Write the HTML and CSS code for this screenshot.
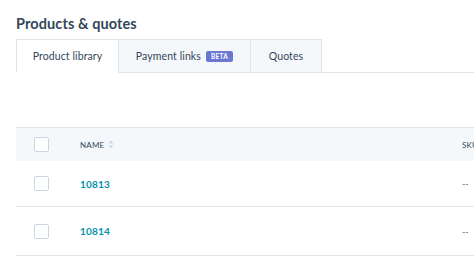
FILE: index.html
```html
<!DOCTYPE html>
<html lang="en">
<head>
    <meta charset="UTF-8">
    <meta name="viewport" content="width=device-width, initial-scale=1.0">
    <title>Products &amp; quotes</title>
    <link rel="stylesheet" href="styles.css">
</head>
<body>
    <div class="page">
        <h1 class="page-title">Products &amp; quotes</h1>

        <div class="tabs">
            <div class="tab active">Product library</div>
            <div class="tab">Payment links <span class="badge">BETA</span></div>
            <div class="tab">Quotes</div>
            <div class="tab-rest"></div>
        </div>

        <div class="table">
            <div class="row head">
                <div class="cell check"><span class="box"></span></div>
                <div class="cell name">NAME
                    <svg class="sort" width="6" height="9" viewBox="0 0 6 9">
                        <path d="M3 0.5 L5.5 3.5 H0.5 Z" fill="#cbd6e2"/>
                        <path d="M3 8.5 L5.5 5.5 H0.5 Z" fill="#cbd6e2"/>
                    </svg>
                </div>
                <div class="cell sku">SKU</div>
            </div>
            <div class="row">
                <div class="cell check"><span class="box"></span></div>
                <div class="cell name"><a href="#" class="link">10813</a></div>
                <div class="cell sku muted">--</div>
            </div>
            <div class="row">
                <div class="cell check"><span class="box"></span></div>
                <div class="cell name"><a href="#" class="link">10814</a></div>
                <div class="cell sku muted">--</div>
            </div>
            <div class="row">
                <div class="cell check"></div>
                <div class="cell name"></div>
                <div class="cell sku"></div>
            </div>
        </div>
    </div>
</body>
</html>
```

FILE: styles.css
```css
body {
    margin: 0;
    padding: 0;
    background-color: #ffffff;
    font-family: Lato, "Open Sans", Arial, sans-serif;
    color: #33475b;
    overflow: hidden;
}

.page {
    padding: 14px 0 0 16px;
    width: 700px;
}

.page-title {
    margin: 0;
    font-size: 14.5px;
    font-weight: 700;
    line-height: 19px;
    letter-spacing: 0.1px;
    color: #33475b;
}

.tabs {
    display: flex;
    margin-top: 6px;
    height: 34px;
}

.tab {
    display: flex;
    align-items: center;
    justify-content: center;
    box-sizing: border-box;
    font-size: 10.5px;
    letter-spacing: 0.1px;
    background: #f5f8fa;
    border: 1px solid #dfe3eb;
    border-left: none;
    color: #33475b;
}

.tab:nth-child(1) { width: 103px; }
.tab:nth-child(2) { width: 132px; }
.tab:nth-child(3) { width: 71px; }

.tab.active {
    background: #ffffff;
    border-left: 1px solid #dfe3eb;
    border-bottom-color: #ffffff;
}

.tab-rest {
    flex: 1;
    border-bottom: 1px solid #dfe3eb;
}

.badge {
    display: inline-block;
    margin-left: 5px;
    padding: 0 5px;
    height: 11px;
    line-height: 11px;
    font-size: 6.5px;
    font-weight: 700;
    letter-spacing: 0.3px;
    color: #ffffff;
    background: #6a78d1;
    border-radius: 2px;
}

.table {
    margin-top: 54px;
    border-top: 1px solid #dfe3eb;
}

.row {
    display: flex;
    align-items: center;
    height: 46px;
    border-bottom: 1px solid #dfe3eb;
    box-sizing: border-box;
}

.row.head {
    height: 33px;
    background: #f5f8fa;
    border-bottom: none;
}

.row:nth-child(3) {
    height: 49px;
}

.cell {
    display: flex;
    align-items: center;
}

.check {
    width: 64px;
    padding-left: 18px;
    box-sizing: border-box;
}

.box {
    width: 13px;
    height: 13px;
    border: 1px solid #cbd6e2;
    border-radius: 2px;
    background: #ffffff;
}

.name {
    width: 382px;
}

.head .name, .head .sku {
    font-size: 8px;
    letter-spacing: 0.2px;
}

.sort {
    margin-left: 4px;
}

.link {
    color: #0091ae;
    font-weight: 700;
    font-size: 10px;
    letter-spacing: 0.2px;
    text-decoration: none;
}

.muted {
    color: #516f90;
    font-size: 9px;
}
```
